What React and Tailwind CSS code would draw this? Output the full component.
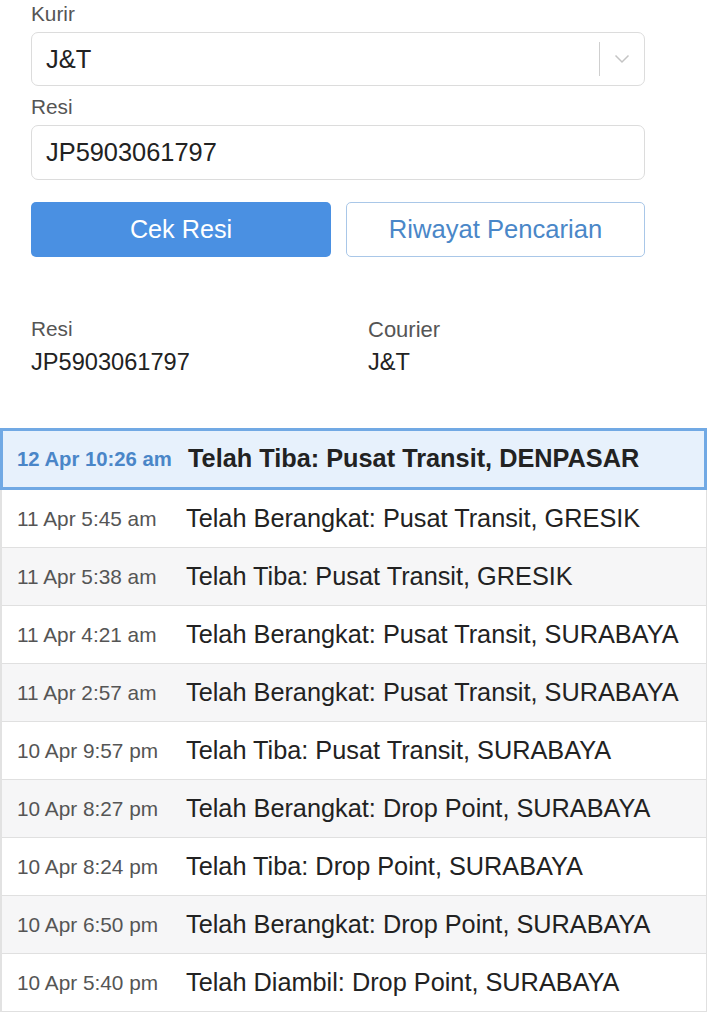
import React from "react";

const rows = [
  ["11 Apr 5:45 am", "Telah Berangkat: Pusat Transit, GRESIK"],
  ["11 Apr 5:38 am", "Telah Tiba: Pusat Transit, GRESIK"],
  ["11 Apr 4:21 am", "Telah Berangkat: Pusat Transit, SURABAYA"],
  ["11 Apr 2:57 am", "Telah Berangkat: Pusat Transit, SURABAYA"],
  ["10 Apr 9:57 pm", "Telah Tiba: Pusat Transit, SURABAYA"],
  ["10 Apr 8:27 pm", "Telah Berangkat: Drop Point, SURABAYA"],
  ["10 Apr 8:24 pm", "Telah Tiba: Drop Point, SURABAYA"],
  ["10 Apr 6:50 pm", "Telah Berangkat: Drop Point, SURABAYA"],
  ["10 Apr 5:40 pm", "Telah Diambil: Drop Point, SURABAYA"],
];

export default function App() {
  return (
    <div
      className="w-[707px] min-h-[1024px] bg-white text-[#222] overflow-hidden"
      style={{ fontFamily: '"Liberation Sans", Arial, sans-serif' }}
    >
      <div className="ml-[31px] w-[614px]">
        <div className="h-[28px] flex items-center text-[20.8px] text-[#555]">Kurir</div>
        <div className="mt-[4px] h-[54px] rounded-[7px] border border-[#dcdcdc] flex items-center">
          <div className="flex-1 pl-[14px] text-[25.5px] text-[#222]">J&amp;T</div>
          <div className="w-px h-[34px] bg-[#cfcfcf]" />
          <div className="w-[44px] flex items-center justify-center">
            <svg width="16" height="10" viewBox="0 0 16 10" fill="none">
              <path d="M1.5 1.5 L8 8 L14.5 1.5" stroke="#c4c4c4" strokeWidth="1.5" />
            </svg>
          </div>
        </div>
        <div className="mt-[7px] h-[28px] flex items-center text-[20.8px] text-[#555]">Resi</div>
        <div className="mt-[4px] h-[55px] rounded-[7px] border border-[#dcdcdc] flex items-center pl-[14px] text-[25.4px] text-[#222]">
          JP5903061797
        </div>
        <div className="mt-[22px] flex gap-[15px]">
          <button className="w-[300px] h-[55px] rounded-[5px] bg-[#4a90e2] text-white text-[25.2px]">
            Cek Resi
          </button>
          <button className="w-[299px] h-[55px] rounded-[5px] border border-[#a9c7e8] bg-white text-[#4a87c8] text-[25.6px]">
            Riwayat Pencarian
          </button>
        </div>
        <div className="mt-[58px] grid grid-cols-[337px_1fr]">
          <div>
            <div className="h-[28px] flex items-center text-[20.8px] text-[#555]">Resi</div>
            <div className="mt-[5px] h-[30px] flex items-center text-[23.6px] text-[#222]">JP5903061797</div>
          </div>
          <div>
            <div className="h-[28px] flex items-center text-[22px] text-[#555]">Courier</div>
            <div className="mt-[5px] h-[30px] flex items-center text-[23.6px] text-[#222]">J&amp;T</div>
          </div>
        </div>
      </div>

      <div className="mt-[50px] w-[707px] border-l-2 border-[#e2e2e2]">
        <div className="h-[62px] -ml-[2px] border-[3px] border-[#71a9e4] bg-[#e7f1fc] flex items-center">
          <div className="w-[185px] pl-[14px] text-[20.3px] font-bold text-[#4a86c8] whitespace-nowrap">
            12 Apr 10:26 am
          </div>
          <div className="text-[25.3px] font-bold text-[#222] whitespace-nowrap">
            Telah Tiba: Pusat Transit, DENPASAR
          </div>
        </div>
        {rows.map(([d, e], i) => (
          <div
            key={i}
            className={
              "h-[58px] border-b border-[#e0e0e0] border-r flex items-center " +
              (i % 2 === 1 ? "bg-[#f6f6f7]" : "bg-white")
            }
          >
            <div className="w-[184px] pl-[15px] text-[20.8px] text-[#555] whitespace-nowrap">{d}</div>
            <div className="text-[25.3px] text-[#222] whitespace-nowrap">{e}</div>
          </div>
        ))}
      </div>
    </div>
  );
}
